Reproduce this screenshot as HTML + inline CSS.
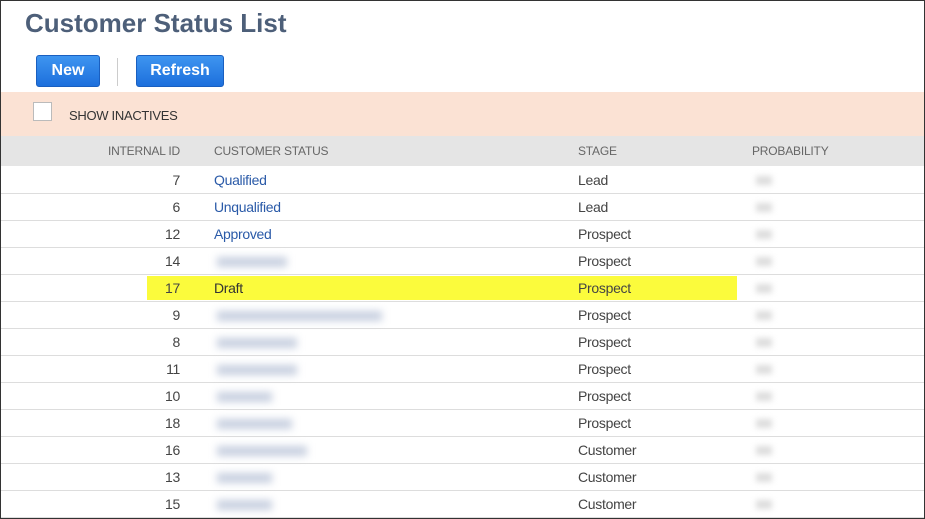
<!DOCTYPE html><html><head><style>
body{margin:0;width:925px;height:519px;overflow:hidden;font-family:"Liberation Sans",sans-serif;background:#fff;position:relative}
.frame{position:absolute;left:0;top:0;width:923px;height:517px;border:1px solid #333;}
h1{position:absolute;left:25px;top:8px;margin:0;font-size:26px;color:#4d5f79;font-weight:bold;letter-spacing:0px}
.btn{position:absolute;top:55px;height:30px;background:linear-gradient(#3e95f0,#1d6fdc);border:1px solid #1a5fc0;border-radius:3px;color:#fff;font-weight:bold;font-size:16px;line-height:30px;text-align:center}
.sep{position:absolute;left:117px;top:58px;width:1px;height:28px;background:#ccc}
.band{position:absolute;left:1px;top:92px;width:923px;height:44px;background:#fbe2d4}
.cb{position:absolute;left:33px;top:102px;width:17px;height:17px;background:#fff;border:1px solid #bbb}
.si{position:absolute;left:69px;top:108px;font-size:13px;color:#333;letter-spacing:-0.3px}
.hdr{position:absolute;left:1px;top:136px;width:923px;height:30px;background:#e5e5e5;font-size:12px;color:#666;letter-spacing:-0.2px}
.hdr span,.row span{position:absolute;top:0}
.hdr span{line-height:31px}
.row{position:absolute;left:1px;width:923px;height:26px;border-bottom:1px solid #ddd;font-size:14px;color:#444;line-height:26px;letter-spacing:-0.3px}
.id{right:744px;text-align:right}
.st{left:213px;color:#2a5aa8}
.sg{left:577px}
.blur{position:absolute;background:#c8d0e0;filter:blur(4px);height:10px;top:9px}
.pb{position:absolute;left:755px;top:9px;width:16px;height:9px;background:#ddd;filter:blur(3px)}
</style></head><body>
<div class="frame"></div>
<h1>Customer Status List</h1>
<div class="btn" style="left:36px;width:62px">New</div>
<div class="sep"></div>
<div class="btn" style="left:136px;width:86px">Refresh</div>
<div class="band"></div><div class="cb"></div><div class="si">SHOW INACTIVES</div>
<div class="hdr"><span style="right:744px">INTERNAL ID</span><span style="left:213px">CUSTOMER STATUS</span><span style="left:577px">STAGE</span><span style="left:751px">PROBABILITY</span></div>
<div class="row" style="top:167px"><span class="id">7</span><span class="st">Qualified</span><span class="sg">Lead</span><i class="pb"></i></div>
<div class="row" style="top:194px"><span class="id">6</span><span class="st">Unqualified</span><span class="sg">Lead</span><i class="pb"></i></div>
<div class="row" style="top:221px"><span class="id">12</span><span class="st">Approved</span><span class="sg">Prospect</span><i class="pb"></i></div>
<div class="row" style="top:248px"><span class="id">14</span><i class="blur" style="left:216px;width:70px"></i><span class="sg">Prospect</span><i class="pb"></i></div>
<div class="row" style="top:275px"><div style="position:absolute;left:146px;top:1px;width:590px;height:24px;background:#fbfb3c"></div><span class="id">17</span><span class="st" style="color:#333">Draft</span><span class="sg">Prospect</span><i class="pb"></i></div>
<div class="row" style="top:302px"><span class="id">9</span><i class="blur" style="left:216px;width:165px"></i><span class="sg">Prospect</span><i class="pb"></i></div>
<div class="row" style="top:329px"><span class="id">8</span><i class="blur" style="left:216px;width:80px"></i><span class="sg">Prospect</span><i class="pb"></i></div>
<div class="row" style="top:356px"><span class="id">11</span><i class="blur" style="left:216px;width:80px"></i><span class="sg">Prospect</span><i class="pb"></i></div>
<div class="row" style="top:383px"><span class="id">10</span><i class="blur" style="left:216px;width:55px"></i><span class="sg">Prospect</span><i class="pb"></i></div>
<div class="row" style="top:410px"><span class="id">18</span><i class="blur" style="left:216px;width:75px"></i><span class="sg">Prospect</span><i class="pb"></i></div>
<div class="row" style="top:437px"><span class="id">16</span><i class="blur" style="left:216px;width:90px"></i><span class="sg">Customer</span><i class="pb"></i></div>
<div class="row" style="top:464px"><span class="id">13</span><i class="blur" style="left:216px;width:55px"></i><span class="sg">Customer</span><i class="pb"></i></div>
<div class="row" style="top:491px"><span class="id">15</span><i class="blur" style="left:216px;width:55px"></i><span class="sg">Customer</span><i class="pb"></i></div>
</body></html>
